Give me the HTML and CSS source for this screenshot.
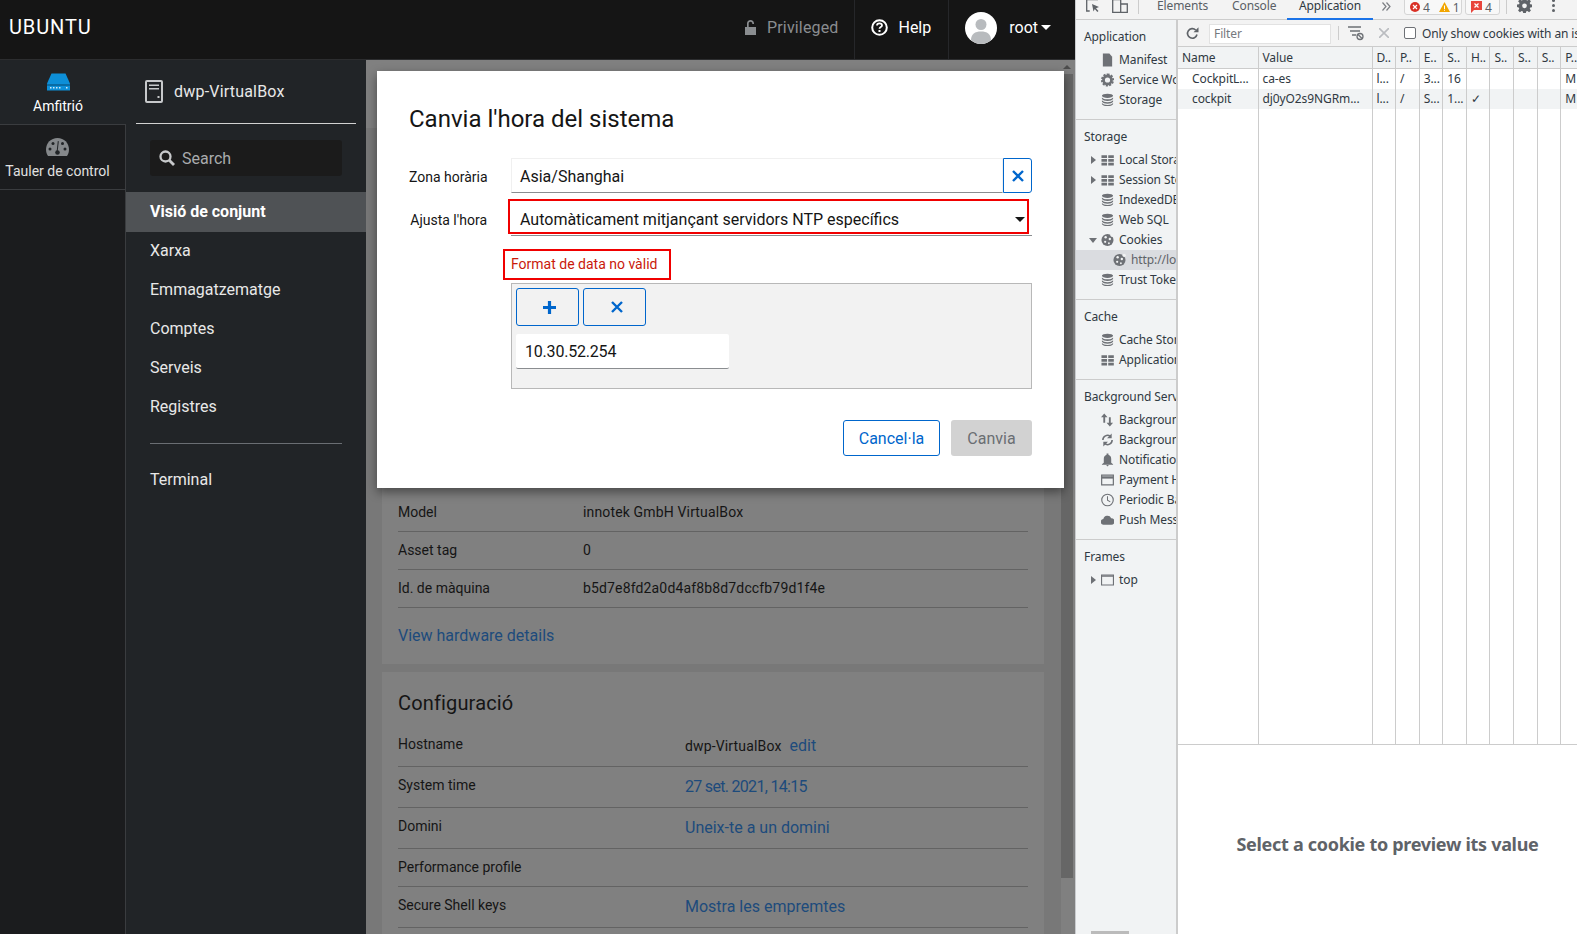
FILE: index.html
```html
<!DOCTYPE html>
<html lang="ca">
<head>
    <meta charset="UTF-8">
    <meta name="viewport" content="width=device-width, initial-scale=1.0">
    <title>Cockpit</title>
    <link rel="stylesheet" href="styles.css">
</head>
<body>
    <div class="shell">
        <header class="topbar">
            <div class="brand">UBUNTU</div>
            <div class="top-actions">
                <div class="top-item privileged">
                    <svg width="11" height="15" viewBox="0 0 11 15"><path fill="#8a8d90" d="M0 7h11v8H0zM2 7V3.500C2 1.500 3.500 0 5.500 0S9 1.500 9 3.500V4H7.300v-.5C7.300 2.500 6.500 1.700 5.500 1.700S3.700 2.500 3.700 3.500V7z"/></svg>
                    <span>Privileged</span>
                </div>
                <div class="top-item help">
                    <svg width="17" height="17" viewBox="0 0 17 17"><circle cx="8.500" cy="8.500" r="7.300" fill="none" stroke="#fff" stroke-width="2"/><path fill="none" stroke="#fff" stroke-width="1.800" d="M6 6.600c0-1.500 1.100-2.200 2.500-2.200s2.500.8 2.500 2c0 1.700-2.500 1.600-2.500 3.400"/><rect x="7.500" y="11" width="2" height="2" fill="#fff"/></svg>
                    <span>Help</span>
                </div>
                <div class="top-item user">
                    <svg width="32" height="32" viewBox="0 0 32 32"><circle cx="16" cy="16" r="16" fill="#fff"/><circle cx="16" cy="12.500" r="5.500" fill="#b8bbbe"/><path fill="#b8bbbe" d="M6 28c0-6 4-8.500 10-8.500S26 22 26 28c-3 2.500-6 4-10 4s-7-1.500-10-4z"/></svg>
                    <span class="user-name">root</span>
                    <span class="caret"></span>
                </div>
            </div>
        </header>

        <div class="body-row">
            <nav class="hosts">
                <div class="host-tab current">
                    <svg width="23" height="17" viewBox="0 0 23 17"><path fill="#0d8fd8" d="M4.500 0h14l4.500 10v7H0v-7z"/><path fill="#06476e" d="M0 11h23v1H0z"/><path fill="#fff" opacity=".8" d="M3 13.500h1.500V15H3zM6 13.500h1.500V15H6zM9 13.500h1.500V15H9zM12 13.500h1.500V15H12zM19 13.500h1.500V15H19z"/></svg>
                    <span>Amfitrió</span>
                </div>
                <div class="host-tab">
                    <svg width="23" height="18" viewBox="0 0 23 18"><path fill="#85888b" d="M11.500 0C5 0 0 5 0 11.500c0 2.500.7 4.700 2 6.500h19c1.300-1.800 2-4 2-6.500C23 5 18 0 11.500 0z"/><g fill="#212427"><circle cx="4" cy="11" r="1.500"/><circle cx="7" cy="5.500" r="1.500"/><circle cx="16.500" cy="5.500" r="1.500"/><circle cx="19" cy="11" r="1.500"/><circle cx="11.500" cy="14.500" r="2.300"/><path d="M11.800 3l1 .2-1.100 10h-1z"/></g></svg>
                    <span>Tauler de control</span>
                </div>
            </nav>

            <aside class="sidebar">
                <div class="side-head">
                    <svg width="18" height="23" viewBox="0 0 18 23"><rect x="1" y="1" width="16" height="21" rx="1" fill="none" stroke="#c7c9cb" stroke-width="2"/><path fill="#c7c9cb" d="M4 4.500h10V6H4zM4 8h10v1.500H4zM12.500 16h2v2h-2z"/></svg>
                    <span>dwp-VirtualBox</span>
                </div>
                <div class="search">
                    <svg width="16" height="16" viewBox="0 0 16 16"><circle cx="6.500" cy="6.500" r="5" fill="none" stroke="#c7c9cb" stroke-width="2.300"/><path stroke="#c7c9cb" stroke-width="2.800" d="M10 10l5 5"/></svg>
                    <span>Search</span>
                </div>
                <ul class="side-menu">
                    <li class="active">Visió de conjunt</li>
                    <li>Xarxa</li>
                    <li>Emmagatzematge</li>
                    <li>Comptes</li>
                    <li>Serveis</li>
                    <li>Registres</li>
                </ul>
                <div class="side-rule"></div>
                <ul class="side-menu">
                    <li>Terminal</li>
                </ul>
            </aside>

            <main class="content">
                <div class="scroll-area">
                    <div class="page-head"></div>
                    <section class="card card-system">
                        <div class="row"><span class="row-label">Model</span><span>innotek GmbH VirtualBox</span></div>
                        <div class="row"><span class="row-label">Asset tag</span><span>0</span></div>
                        <div class="row"><span class="row-label">Id. de màquina</span><span>b5d7e8fd2a0d4af8b8d7dccfb79d1f4e</span></div>
                        <a class="card-link">View hardware details</a>
                    </section>
                    <section class="card card-config">
                        <h2>Configuració</h2>
                        <div class="row tall"><span class="row-label">Hostname</span><span class="row-value"><span class="small">dwp-VirtualBox</span><a>edit</a></span></div>
                        <div class="row tall"><span class="row-label">System time</span><span class="row-value"><a class="time">27 set. 2021, 14:15</a></span></div>
                        <div class="row tall"><span class="row-label">Domini</span><span class="row-value"><a>Uneix-te a un domini</a></span></div>
                        <div class="row"><span class="row-label">Performance profile</span></div>
                        <div class="row tall"><span class="row-label">Secure Shell keys</span><span class="row-value"><a>Mostra les empremtes</a></span></div>
                    </section>
                </div>
                <div class="scrollbar"><div class="scroll-arrow"></div><div class="scroll-thumb"></div></div>

                <div class="modal">
                    <h1>Canvia l'hora del sistema</h1>
                    <div class="form-row first">
                        <label>Zona horària</label>
                        <div class="tz-field"><span class="input-text">Asia/Shanghai</span></div>
                        <button class="tz-clear"><svg width="12" height="12" viewBox="0 0 12 12"><path stroke="#06c" stroke-width="2.400" d="M1 1l10 10M11 1L1 11"/></svg></button>
                    </div>
                    <div class="form-row second">
                        <label>Ajusta l'hora</label>
                        <div class="select-field">
                            <span class="input-text">Automàticament mitjançant servidors NTP específics</span>
                            <span class="select-caret"></span>
                            <div class="mark"></div>
                        </div>
                    </div>
                    <div class="error-line"><span class="error-box">Format de data no vàlid</span></div>
                    <div class="ntp-panel">
                        <div class="ntp-buttons">
                            <button class="ntp-btn"><svg width="13" height="13" viewBox="0 0 13 13"><path stroke="#06c" stroke-width="3.200" d="M6.500 0v13M0 6.500h13"/></svg></button>
                            <button class="ntp-btn"><svg width="12" height="12" viewBox="0 0 12 12"><path stroke="#06c" stroke-width="2.400" d="M1 1l10 10M11 1L1 11"/></svg></button>
                        </div>
                        <div class="ntp-input">10.30.52.254</div>
                    </div>
                    <div class="modal-foot">
                        <button class="btn btn-cancel">Cancel·la</button>
                        <button class="btn btn-apply">Canvia</button>
                    </div>
                </div>
            </main>
        </div>
    </div>

    <div class="devtools">
        <div class="dt-tabs">
            <svg class="dt-inspect" width="14" height="14" viewBox="0 0 14 14"><path fill="none" stroke="#5f6368" stroke-width="1.300" d="M12 .7H.7V12h3"/><path fill="#5f6368" d="M6 5l7 3-3 1.200 2.500 2.800-1.200 1L8.800 10 7.500 12.500z"/></svg>
            <svg class="dt-device" width="16" height="14" viewBox="0 0 16 14"><path fill="none" stroke="#5f6368" stroke-width="1.300" d="M.7.700h8v12.600h-8zM9 5h6.300v8.300H9"/></svg>
            <span class="dt-sep"></span>
            <span class="dt-tab">Elements</span>
            <span class="dt-tab">Console</span>
            <span class="dt-tab selected">Application</span>
            <svg class="dt-more" width="9" height="9" viewBox="0 0 9 9"><path fill="none" stroke="#7b7e83" stroke-width="1.200" d="M.5.500l3.500 4-3.500 4M4.500.500l3.500 4-3.500 4"/></svg>
            <span class="dt-badge">
                <svg width="10" height="10" viewBox="0 0 10 10"><circle cx="5" cy="5" r="5" fill="#d93025"/><path stroke="#fff" stroke-width="1.200" d="M3 3l4 4M7 3L3 7"/></svg><b>4</b>
                <svg width="11" height="10" viewBox="0 0 11 10"><path fill="#f2a600" d="M5.500 0L11 10H0z"/><path fill="#fff" d="M5 3.500h1v3.500H5zM5 7.700h1v1H5z"/></svg><b>1</b>
            </span>
            <span class="dt-badge issue">
                <svg width="11" height="12" viewBox="0 0 11 12"><path fill="#e8453c" d="M0 0h11v9H3l-3 3z"/><path stroke="#fff" stroke-width="1.200" d="M3.500 2.500l4 4M7.500 2.500l-4 4"/></svg><b>4</b>
            </span>
            <span class="dt-sep right"></span>
            <svg class="dt-gear" width="15" height="15" viewBox="0 0 14 14"><path fill="#5f6368" d="M5.800 0h2.400l.3 1.900 1.200.5L11.300 1.300 13 3l-1.100 1.600.5 1.200 1.900.3v2.400l-1.900.3-.5 1.200 1.100 1.600L11.300 13.300l-1.600-1.100-1.200.5-.3 1.900H5.800l-.3-1.900-1.200-.5-1.600 1.100L1 11.600l1.100-1.600-.5-1.200L0 8.500V6.100l1.900-.3.500-1.200L1 3l1.700-1.700 1.600 1.100 1.200-.5z"/><circle cx="7" cy="7.300" r="2.200" fill="#f3f3f3"/></svg>
            <span class="dt-dots"><i></i><i></i><i></i></span>
        </div>

        <div class="dt-body">
            <div class="dt-side">
                <div class="dt-group">
                    <div class="dt-title">Application</div>
                    <div class="dt-item"><svg viewBox="0 0 14 14"><path fill="#6e7176" d="M2 0h7l3 3.500V14H2z"/></svg><span>Manifest</span></div>
                    <div class="dt-item"><svg viewBox="0 0 14 14"><circle cx="7" cy="7" r="4.300" fill="none" stroke="#6e7176" stroke-width="3"/><path stroke="#6e7176" stroke-width="2" stroke-dasharray="2.300 1.350" fill="none" d="M7 .9a6.100 6.100 0 1 1 0 12.200a6.100 6.100 0 1 1 0-12.200"/></svg><span>Service Workers</span></div>
                    <div class="dt-item"><svg viewBox="0 0 14 14"><use href="#db"/></svg><span>Storage</span></div>
                </div>
                <div class="dt-group">
                    <div class="dt-title">Storage</div>
                    <div class="dt-item"><i class="tri"></i><svg viewBox="0 0 14 14"><use href="#grid"/></svg><span>Local Storage</span></div>
                    <div class="dt-item"><i class="tri"></i><svg viewBox="0 0 14 14"><use href="#grid"/></svg><span>Session Storage</span></div>
                    <div class="dt-item"><svg viewBox="0 0 14 14"><use href="#db"/></svg><span>IndexedDB</span></div>
                    <div class="dt-item"><svg viewBox="0 0 14 14"><use href="#db"/></svg><span>Web SQL</span></div>
                    <div class="dt-item"><i class="tri open"></i><svg viewBox="0 0 14 14"><use href="#cookie"/></svg><span>Cookies</span></div>
                    <div class="dt-item child selected"><svg viewBox="0 0 14 14"><use href="#cookie"/></svg><span>http://localhost:9090</span></div>
                    <div class="dt-item"><svg viewBox="0 0 14 14"><use href="#db"/></svg><span>Trust Tokens</span></div>
                </div>
                <div class="dt-group">
                    <div class="dt-title">Cache</div>
                    <div class="dt-item"><svg viewBox="0 0 14 14"><use href="#db"/></svg><span>Cache Storage</span></div>
                    <div class="dt-item"><svg viewBox="0 0 14 14"><use href="#grid"/></svg><span>Application Cache</span></div>
                </div>
                <div class="dt-group">
                    <div class="dt-title">Background Services</div>
                    <div class="dt-item"><svg viewBox="0 0 14 14"><path fill="#6e7176" d="M3.500 0L7 4H4.500v6h-2V4H0zM8.500 4h2v6H13l-3.500 4L6 10h2.500z"/></svg><span>Background Fetch</span></div>
                    <div class="dt-item"><svg viewBox="0 0 14 14"><path fill="none" stroke="#6e7176" stroke-width="1.700" d="M2 7a5 5 0 0 1 8-4M12 7a5 5 0 0 1-8 4"/><path fill="#6e7176" d="M11.500 0v5h-5zM2.500 14V9h5z"/></svg><span>Background Sync</span></div>
                    <div class="dt-item"><svg viewBox="0 0 14 14"><path fill="#6e7176" d="M6 0h2v1.300C10 2 11 3.500 11 6v4l2 1.500V12H1v-.5L3 10V6c0-2.500 1-4 3-4.700zM5.500 12.500h3L7 14z"/></svg><span>Notifications</span></div>
                    <div class="dt-item"><svg viewBox="0 0 14 14"><path fill="none" stroke="#6e7176" stroke-width="1.300" d="M.7 1.700h12.600v10.600H.7z"/><path fill="#6e7176" d="M1 3h12v2.500H1z"/></svg><span>Payment Handler</span></div>
                    <div class="dt-item"><svg viewBox="0 0 14 14"><circle cx="7" cy="7" r="6.200" fill="none" stroke="#6e7176" stroke-width="1.200"/><path fill="none" stroke="#6e7176" stroke-width="1.100" d="M7 3v4.300l3 1.700"/></svg><span>Periodic Background Sync</span></div>
                    <div class="dt-item"><svg viewBox="0 0 14 14"><path fill="#6e7176" d="M3 12a3 3 0 0 1-.5-6A4.500 4.500 0 0 1 11 5a3.500 3.500 0 0 1 0 7z"/></svg><span>Push Messaging</span></div>
                </div>
                <div class="dt-group last">
                    <div class="dt-title">Frames</div>
                    <div class="dt-item"><i class="tri"></i><svg viewBox="0 0 14 14"><path fill="none" stroke="#6e7176" stroke-width="1.200" d="M.6 1.600h12.800v10.800H.6z"/><path fill="#6e7176" d="M1 2h12v1.500H1z"/></svg><span>top</span></div>
                </div>
                <div class="dt-hscroll"><div class="dt-hthumb"></div></div>
            </div>

            <div class="dt-main">
                <div class="dt-toolbar">
                    <svg class="dt-reload" width="13" height="13" viewBox="0 0 13 13"><path fill="none" stroke="#5f6368" stroke-width="1.600" d="M11 7.500A4.800 4.800 0 1 1 9.700 3"/><path fill="#5f6368" d="M12.500 .3v5h-5z"/></svg>
                    <div class="dt-filter">Filter</div>
                    <span class="dt-sep tool"></span>
                    <svg class="dt-clear" width="16" height="15" viewBox="0 0 16 15"><path stroke="#6e7176" stroke-width="1.300" d="M0 1h13M2 5h10M4 9h4"/><circle cx="12" cy="10.500" r="3" fill="none" stroke="#6e7176" stroke-width="1.300"/><path stroke="#6e7176" stroke-width="1.200" d="M10 8.500l4 4"/></svg>
                    <svg class="dt-x" width="10" height="10" viewBox="0 0 10 10"><path stroke="#babcc0" stroke-width="1.600" d="M0 0l10 10M10 0L0 10"/></svg>
                    <span class="dt-check"></span>
                    <span class="dt-check-label">Only show cookies with an issue</span>
                </div>
                <div class="dt-table-wrap">
                    <table class="cookies">
                        <colgroup>
                            <col class="c-name"><col class="c-value"><col class="c-s"><col class="c-s"><col class="c-s"><col class="c-s"><col class="c-s"><col class="c-s"><col class="c-s"><col class="c-s"><col class="c-s">
                        </colgroup>
                        <thead>
                            <tr><th>Name</th><th>Value</th><th>D..</th><th>P..</th><th>E..</th><th>S..</th><th>H..</th><th>S..</th><th>S..</th><th>S..</th><th>P..</th></tr>
                        </thead>
                        <tbody>
                            <tr><td class="first-col">CockpitL...</td><td>ca-es</td><td>l...</td><td>/</td><td>3...</td><td>16</td><td></td><td></td><td></td><td></td><td>M</td></tr>
                            <tr class="alt"><td class="first-col">cockpit</td><td>dj0yO2s9NGRm...</td><td>l...</td><td>/</td><td>S...</td><td>1...</td><td>✓</td><td></td><td></td><td></td><td>M</td></tr>
                            <tr class="filler"><td></td><td></td><td></td><td></td><td></td><td></td><td></td><td></td><td></td><td></td><td></td></tr>
                        </tbody>
                    </table>
                </div>
                <div class="dt-preview">Select a cookie to preview its value</div>
            </div>
        </div>
    </div>

    <svg class="defs" width="0" height="0">
        <defs>
            <g id="db" fill="#6e7176">
                <ellipse cx="7" cy="2.500" rx="6" ry="2.300"/>
                <path d="M1 4.300c1 1.400 3 2 6 2s5-.6 6-2V6c-1 1.400-3 2-6 2s-5-.6-6-2zM1 7.300c1 1.400 3 2 6 2s5-.6 6-2V9c-1 1.400-3 2-6 2s-5-.6-6-2zM1 10.300c1 1.400 3 2 6 2s5-.6 6-2v1.200c-1 1.400-3 2-6 2s-5-.6-6-2z"/>
            </g>
            <g id="grid" fill="#6e7176">
                <path d="M.5 1.800h6v3h-6zM7.800 1.800h6v3h-6zM.5 5.900h6v3h-6zM7.800 5.900h6v3h-6zM.5 10h6v3h-6zM7.800 10h6v3h-6z"/>
            </g>
            <g id="cookie">
                <circle cx="7" cy="7" r="6.500" fill="#6e7176"/>
                <g fill="#f1f3f4"><circle cx="5" cy="4" r="1.300"/><circle cx="9.500" cy="6" r="1.300"/><circle cx="4.500" cy="9" r="1.200"/><circle cx="8.500" cy="10.500" r="1"/><circle cx="12" cy="2" r="1.800"/></g>
            </g>
        </defs>
    </svg>
</body>
</html>
```

FILE: styles.css
```css
* {
    box-sizing: border-box;
}
body {
    margin: 0;
    height: 934px;
    overflow: hidden;
    display: flex;
    font-family: 'Roboto', sans-serif;
    background-color: #fff;
}
ul {
    list-style: none;
    margin: 0;
    padding: 0;
}
button {
    font-family: inherit;
    background: none;
    padding: 0;
    display: flex;
    align-items: center;
    justify-content: center;
}
.defs {
    position: absolute;
}
.shell {
    width: 1075px;
    flex: none;
    display: flex;
    flex-direction: column;
}

/* top bar */
.topbar {
    height: 60px;
    flex: none;
    background-color: #151515;
    border-bottom: 1px solid #2c2d2f;
    display: flex;
    justify-content: space-between;
    align-items: stretch;
    color: #fff;
}
.brand {
    font-size: 20px;
    letter-spacing: 0.9px;
    padding: 15px 0 0 9px;
}
.top-actions {
    display: flex;
}
.top-item {
    display: flex;
    align-items: center;
    font-size: 16px;
    border-left: 1px solid #26272a;
    padding-bottom: 4px;
}
.privileged {
    border-left: none;
    color: #8a8d90;
    gap: 11px;
    padding-right: 16px;
    letter-spacing: 0.15px;
}
.help {
    gap: 10px;
    padding-left: 16px;
    padding-right: 17px;
}
.user {
    padding-left: 16px;
    padding-right: 24px;
}
.user-name {
    margin-left: 12px;
}
.caret {
    margin-left: 3px;
    border: 5px solid transparent;
    border-top-color: #fff;
    border-bottom: none;
}

/* left columns */
.body-row {
    flex: 1;
    display: flex;
    min-height: 0;
}
.hosts {
    width: 126px;
    flex: none;
    background-color: #1b1c1e;
    border-right: 1px solid #3a3c3f;
}
.host-tab {
    height: 65px;
    border-bottom: 1px solid #3a3c3f;
    display: flex;
    flex-direction: column;
    align-items: center;
    padding: 13px 10px 0 0;
    font-size: 14px;
    color: #e0e0e0;
    gap: 7px;
    white-space: nowrap;
}
.host-tab svg {
    height: 18px;
}
.host-tab.current {
    background-color: #212427;
    width: 126px;
    color: #fff;
}
.sidebar {
    width: 240px;
    flex: none;
    background-color: #212427;
    color: #e8e8e8;
    font-size: 16px;
}
.side-head {
    height: 64px;
    margin: 0 10px;
    border-bottom: 1px solid #d2d2d2;
    display: flex;
    align-items: center;
    gap: 11px;
    padding-left: 9px;
    letter-spacing: 0.2px;
}
.search {
    height: 36px;
    margin: 16px 24px;
    background-color: #1b1b1b;
    border-radius: 3px;
    display: flex;
    align-items: center;
    gap: 7px;
    padding-left: 9px;
    color: #a9abad;
}
.side-menu li {
    height: 39px;
    padding: 0 0 2px 24px;
    display: flex;
    align-items: center;
}
.side-menu li.active {
    height: 40px;
    background-color: #4f5255;
    font-weight: 700;
    color: #fff;
}
.side-rule {
    height: 1px;
    margin: 16px 24px 17px;
    background-color: #6a6e73;
}

/* main page behind the dialog */
.content {
    flex: 1;
    position: relative;
    background-color: #787878;
    display: flex;
    min-width: 0;
    overflow: hidden;
}
.scroll-area {
    flex: 1;
    color: #151515;
    font-size: 14px;
    letter-spacing: 0.15px;
    min-width: 0;
}
.page-head {
    height: 68px;
    background-color: #808080;
}
.scrollbar {
    width: 14px;
    flex: none;
    background-color: #808080;
}
.scroll-arrow {
    height: 14px;
    padding: 5px 0 0 2px;
}
.scroll-arrow::before {
    content: "";
    display: block;
    width: 0;
    border: 4px solid transparent;
    border-bottom: 4px solid #4d4d4d;
    border-top: none;
}
.scroll-thumb {
    width: 12px;
    height: 804px;
    background-color: #666;
}
.card {
    background-color: #808080;
    margin: 0 17px 0 16px;
    padding: 0 16px;
}
.card a {
    color: #1d4b7c;
}
.card-system {
    height: 536px;
    display: flex;
    flex-direction: column;
    justify-content: flex-end;
    padding-bottom: 19px;
    margin-bottom: 8px;
}
.card-link {
    font-size: 16px;
    letter-spacing: 0;
    padding-top: 18px;
}
.card-config {
    height: 270px;
    padding-top: 19px;
}
.card-config h2 {
    margin: 0 0 11px;
    font-size: 20px;
    font-weight: 400;
    line-height: 24px;
}
.row {
    height: 38px;
    flex: none;
    display: flex;
    align-items: center;
    border-bottom: 1px solid #636363;
    padding-bottom: 2px;
}
.row-label {
    width: 185px;
    flex: none;
    letter-spacing: 0;
}
.card-config .row-label {
    width: 287px;
}
.row.tall {
    height: 41px;
}
.row.tall .row-label {
    margin-top: -2px;
}
.row-value {
    font-size: 16px;
    letter-spacing: 0;
    display: flex;
    align-items: baseline;
    gap: 8px;
}
.small {
    font-size: 14px;
    letter-spacing: 0.15px;
}
.card a.time {
    letter-spacing: -0.7px;
}

/* dialog */
.modal {
    position: absolute;
    left: 11px;
    top: 11px;
    width: 687px;
    height: 417px;
    background-color: #fff;
    box-shadow: 0 4px 10px rgba(0, 0, 0, 0.45);
    padding: 33px 32px 0;
    color: #151515;
    display: flex;
    flex-direction: column;
}
.modal h1 {
    margin: 0 0 24px;
    font-size: 24px;
    font-weight: 400;
    line-height: 30px;
}
.form-row {
    display: flex;
}
.form-row label {
    width: 102px;
    padding-right: 24px;
    text-align: right;
    font-size: 14px;
    flex: none;
    align-self: center;
    white-space: nowrap;
}
.form-row.first {
    height: 35px;
    margin-bottom: 6px;
}
.form-row.first label {
    padding-top: 2px;
}
.form-row.second {
    height: 37px;
}
.form-row.second label {
    padding-top: 4px;
}
.input-text {
    font-size: 16px;
}
.tz-field {
    flex: 1;
    border: 1px solid #f0f0f0;
    border-bottom-color: #8a8d90;
    padding: 2px 0 0 8px;
    display: flex;
    align-items: center;
}
.tz-clear {
    width: 29px;
    border: 1px solid #06c;
    border-radius: 0 3px 3px 0;
}
.select-field {
    flex: 1;
    position: relative;
    border-bottom: 1px solid #8a8d90;
    padding: 5px 0 0 9px;
    display: flex;
    align-items: center;
    justify-content: space-between;
}
.select-caret {
    margin-right: 7px;
    border: 5px solid transparent;
    border-top-color: #151515;
    border-bottom: none;
}
.mark {
    position: absolute;
    left: -3px;
    top: 0;
    right: 3px;
    height: 35px;
    border: 2px solid #f00000;
}
.error-line {
    height: 47px;
    padding: 13px 0 0 94px;
}
.error-box {
    display: inline-block;
    height: 31px;
    line-height: 27px;
    padding: 0 12px 0 6px;
    border: 2px solid #f00000;
    color: #c9190b;
    font-size: 14px;
}
.ntp-panel {
    height: 106px;
    margin-left: 102px;
    background-color: #f2f2f2;
    border: 1px solid #b8b8b8;
    padding: 4px;
}
.ntp-buttons {
    display: flex;
    gap: 4px;
    margin-bottom: 8px;
}
.ntp-btn {
    width: 63px;
    height: 38px;
    padding-left: 4px;
    border: 1px solid #06c;
    border-radius: 3px;
}
.ntp-input {
    width: 213px;
    height: 35px;
    background-color: #fff;
    border-bottom: 1px solid #8a8d90;
    border-radius: 2px;
    padding-left: 9px;
    font-size: 16px;
    letter-spacing: -0.2px;
    display: flex;
    align-items: center;
}
.modal-foot {
    display: flex;
    justify-content: flex-end;
    gap: 11px;
    margin-top: 31px;
}
.btn {
    height: 36px;
    font-size: 16px;
    border-radius: 3px;
}
.btn-cancel {
    width: 97px;
    border: 1px solid #06c;
    color: #06c;
}
.btn-apply {
    width: 81px;
    border: none;
    background-color: #d2d2d2;
    color: #6a6e73;
}

/* devtools */
.devtools {
    flex: 1;
    min-width: 0;
    display: flex;
    flex-direction: column;
    border-left: 1px solid #c9cbce;
    font-family: 'Noto Sans', sans-serif;
    font-size: 12px;
    letter-spacing: -0.1px;
    color: #303942;
}
.dt-tabs {
    height: 20px;
    flex: none;
    background-color: #f3f3f3;
    border-bottom: 1px solid #ccc;
    position: relative;
    display: flex;
    color: #5a5f66;
}
.dt-tabs > * {
    position: absolute;
}
.dt-inspect { left: 10px; top: -1px; }
.dt-device { left: 36px; top: -1px; }
.dt-sep {
    width: 1px;
    background-color: #ccc;
}
.dt-tabs > .dt-sep { left: 62px; top: 0; height: 14px; }
.dt-tabs > .dt-sep.right { left: 430px; }
.dt-tab { top: -3px; }
.dt-tab:nth-of-type(2) { left: 81px; }
.dt-tab:nth-of-type(3) { left: 156px; }
.dt-tab.selected {
    left: 211px;
    width: 86px;
    height: 23px;
    border-bottom: 2px solid #1a73e8;
    text-align: center;
    color: #303942;
}
.dt-more { left: 306px; top: 2px; }
.dt-badge {
    left: 328px;
    top: -4px;
    height: 19px;
    width: 58px;
    background-color: #f8f8f8;
    border: 1px solid #d5d5d5;
    border-radius: 0 0 3px 3px;
    display: flex;
    align-items: center;
    padding: 3px 0 0 5px;
    gap: 3px;
}
.dt-badge svg {
    flex: none;
}
.dt-badge b {
    font-weight: 400;
    margin-right: 6px;
}
.dt-badge.issue { left: 389px; width: 35px; }
.dt-gear { left: 441px; top: -2px; }
.dt-dots { left: 476px; top: -1px; display: flex; flex-direction: column; gap: 2px; }
.dt-dots i { width: 3px; height: 3px; background-color: #5f6368; border-radius: 50%; }
.dt-body {
    flex: 1;
    display: flex;
    min-height: 0;
}
.dt-side {
    width: 102px;
    flex: none;
    background-color: #f1f3f4;
    border-right: 2px solid #ccc;
    position: relative;
    overflow: hidden;
}
.dt-group {
    padding: 7px 0 9px;
    border-bottom: 1px solid #ccc;
}
.dt-group.last {
    border-bottom: none;
}
.dt-title {
    height: 20px;
    line-height: 20px;
    padding-left: 8px;
    margin-bottom: 3px;
    white-space: nowrap;
}
.dt-item {
    height: 20px;
    position: relative;
    padding-left: 43px;
    line-height: 20px;
    white-space: nowrap;
}
.dt-item svg {
    position: absolute;
    left: 25px;
    top: 3px;
    width: 13px;
    height: 14px;
}
.dt-item.child {
    padding-left: 55px;
    color: #5f6368;
}
.dt-item.child svg {
    left: 37px;
}
.dt-item.selected {
    background-color: #dadce0;
}
.tri {
    position: absolute;
    left: 15px;
    top: 6px;
    border: 4px solid transparent;
    border-left: 5px solid #6e7176;
    border-right: none;
}
.tri.open {
    left: 13px;
    top: 8px;
    border: 4px solid transparent;
    border-top: 5px solid #6e7176;
    border-bottom: none;
}
.dt-hscroll {
    position: absolute;
    left: 0;
    right: 0;
    bottom: 0;
    height: 3px;
}
.dt-hthumb {
    width: 38px;
    height: 3px;
    margin-left: 15px;
    background-color: #bbb;
}
.dt-main {
    flex: 1;
    min-width: 0;
    display: flex;
    flex-direction: column;
}
.dt-toolbar {
    height: 27px;
    flex: none;
    background-color: #f3f3f3;
    border-bottom: 1px solid #ccc;
    display: flex;
    align-items: center;
    white-space: nowrap;
    overflow: hidden;
}
.dt-reload { margin-left: 8px; flex: none; }
.dt-filter {
    margin: 2px 0 0 10px;
    width: 122px;
    height: 20px;
    flex: none;
    background-color: #fff;
    border: 1px solid #e2e2e2;
    padding-left: 4px;
    line-height: 18px;
    color: #75797e;
}
.dt-sep.tool { height: 14px; margin-left: 7px; flex: none; }
.dt-clear { margin-left: 9px; flex: none; }
.dt-x { margin-left: 15px; flex: none; }
.dt-check {
    margin-left: 15px;
    width: 12px;
    height: 12px;
    flex: none;
    background-color: #fff;
    border: 1px solid #6e7176;
    border-radius: 2px;
}
.dt-check-label { margin-left: 6px; }
.dt-table-wrap {
    height: 698px;
    flex: none;
    border-bottom: 1px solid #ccc;
    overflow: hidden;
}
.cookies {
    width: 406px;
    height: 100%;
    table-layout: fixed;
    border-collapse: collapse;
    white-space: nowrap;
}
.c-name { width: 80px; }
.c-value { width: 114px; }
.c-s { width: 23.600px; }
.cookies th,
.cookies td {
    padding: 0 4px;
    overflow: hidden;
    border-right: 1px solid #ccc;
    font-weight: 400;
    text-align: left;
    height: 20px;
    line-height: 20px;
}
.cookies th {
    height: 21px;
    padding-top: 1px;
    background-color: #f1f3f4;
    border-bottom: 1px solid #ccc;
}
.cookies td.first-col {
    padding-left: 14px;
}
.cookies tr.alt td {
    background-color: #f1f3f4;
}
.cookies tr.filler td {
    height: auto;
}
.dt-preview {
    flex: 1;
    display: flex;
    align-items: center;
    justify-content: center;
    font-size: 18px;
    font-weight: 700;
    letter-spacing: -0.3px;
    color: #5f6368;
    padding: 8px 0 0 20px;
}
```
